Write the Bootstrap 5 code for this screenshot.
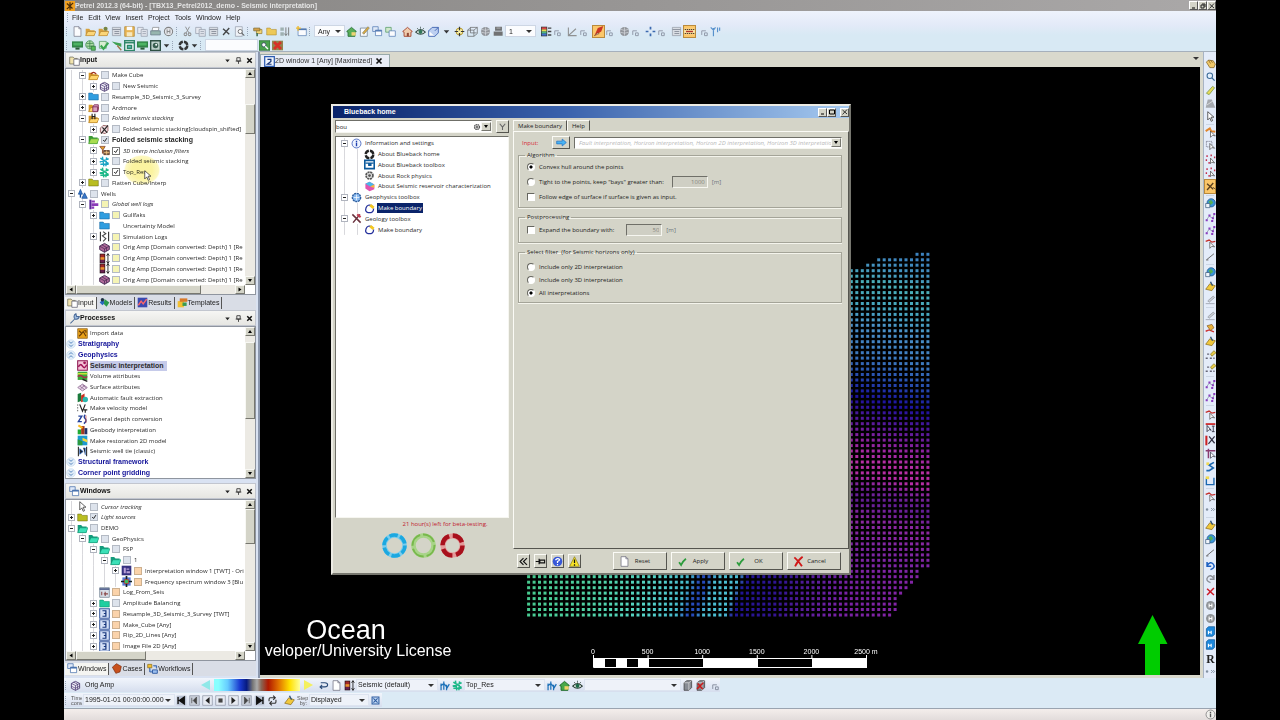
<!DOCTYPE html>
<html lang="en">
<head>
<meta charset="utf-8">
<meta name="viewport" content="width=device-width, initial-scale=1">
<title>Petrel 2012.3 - Seismic interpretation</title>
<link href="https://cdn.jsdelivr.net/npm/bootstrap@5.3.0/dist/css/bootstrap.min.css" rel="stylesheet">
<style>
:root{--face:#d4d4c8;--edge:#8b97ad}
body{background:#000;color:#222;font:7px/10px "Liberation Sans",Arial,sans-serif;padding:0 5%}
button,input,select{font:inherit;color:inherit;border-radius:0}
svg{display:block;flex:none}
.ic{width:11px;height:11px}
.app{background:#dbeaf5;min-height:100vh}
.tiny{font-family:"Open Sans","Noto Sans",sans-serif;font-size:6px;color:#1c1c1c}
.title-bar{background:linear-gradient(90deg,#868482,#aaa8a8);color:#e4e4e4;height:11px;font-weight:bold;padding-left:1px}
.title-bar .ic{width:10px;height:10px}
.bars{background:linear-gradient(#eef3fc,#e3eaf8 35%,#d8e9f4 60%);height:41px;border-bottom:1px solid #a5b0bc}
.menu-row{height:13px;padding-left:3px}
.menu-row a{color:#222;text-decoration:none;margin-right:5px}
.tb-row{height:14px;padding-left:2px}
.tb{border:0;background:none;padding:0;width:13px;height:13px;display:flex;align-items:center;justify-content:center;flex:none}
.tb.on{background:#fbc76a;border:1px solid #b98a3c}
.tb.slim{width:9px}
.tb-row .ic{opacity:.9}
.grip{width:5px;height:9px;border-left:1px dotted #98a6b8;flex:none}
.grip.mid{margin-left:1px}
.pick{appearance:none;border:1px solid #cdd6e4;background:#fbfcfe;padding:0 3px;height:12px;line-height:9px;flex:none;border-radius:0}
footer .pick{background:#eef2f9;border-color:#dde4f0;padding:0 0 0 1px}
.pickbox{position:relative;display:flex;flex:none}
.pickbox::after,.caret::after{content:"";border:3px solid transparent;border-top-color:#333;border-bottom:0;position:absolute;right:4px;top:5px}
.side{width:196px;flex:none;background:#d9e2f2;border-right:2px solid var(--edge);padding:0 2px 0 1px}
.pane-head{height:16px;background:linear-gradient(#f6f6f4,#e6e6e2);border:1px solid #c2c6cf;padding:0 0 0 3px;font-weight:bold;color:#111;margin:0;font-size:7px;line-height:10px}
.pane-head button{border:0;background:none;padding:0;width:11px;height:11px;display:flex;align-items:center;justify-content:center}
.pane-head button .ic{width:9px;height:9px}
.pane-body{background:#fff;border:1px solid #8f959f;overflow:hidden}
.rows{display:grid;grid-auto-rows:1fr;min-width:0;overflow:hidden;padding-top:1px}
.rows-20{height:30vh}.rows-14{height:21vh}
.rw{display:flex;align-items:center;white-space:nowrap;min-width:0;min-height:0;position:relative}
.rw label,.rw a{margin-left:2px;color:#2a2a2a;text-decoration:none}
.gd,.xp{width:11px;flex:none;align-self:stretch;background:linear-gradient(#d8d8dc,#d8d8dc) center/1px 100% no-repeat;display:flex;align-items:center;justify-content:center}
.xp i{width:7px;height:7px;border:1px solid #b0b4be;background:linear-gradient(#222,#222) center/3px 1px no-repeat,#fff}
.xp i.plus{background:linear-gradient(#222,#222) center/3px 1px no-repeat,linear-gradient(#222,#222) center/1px 3px no-repeat,#fff}
.ck{appearance:none;width:8px;height:8px;margin:0 1px 0 2px;border:1px solid #b4bac4;background:#dde3ec;flex:none}
.ck.yel{background:#f5f4b4}.ck.pch{background:#fbd3aa;border-color:#cdb08f}.ck.wht{background:#fff;border-color:#777}
.ck:checked{background-image:url("data:image/svg+xml,%3Csvg xmlns='http://www.w3.org/2000/svg' viewBox='0 0 8 8'%3E%3Cpath d='M1.5 4l2 2 3-4.5' fill='none' stroke='%23222' stroke-width='1.3'/%3E%3C/svg%3E")}
.bold-row{font-family:"Liberation Sans",sans-serif;font-size:7px;font-weight:bold}
.halo{position:absolute;left:58px;top:-12px;width:36px;height:30px;border-radius:50%;background:radial-gradient(#fbf3a0 40%,#fdf8c0 65%,transparent 72%);mix-blend-mode:multiply}
.ptr{position:absolute;left:76px;top:3px}
.vs{width:10px;background:#eceae4;flex:none;display:flex;flex-direction:column}
.hs{height:9px;background:#eceae4;display:flex;margin-right:10px}
.nub{width:10px;height:9px;border:1px solid;border-color:#f8f8f4 #77776f #77776f #f8f8f4;background:var(--face);padding:0;display:flex;align-items:center;justify-content:center;flex:none}
.nub::after{content:"";border:2px solid transparent;border-top:0;border-bottom:3px solid #000}
.nub.dn::after{transform:rotate(180deg)}.nub.lf::after{transform:rotate(-90deg)}.nub.rt::after{transform:rotate(90deg)}
.thumb{border:1px solid;border-color:#f8f8f4 #77776f #77776f #f8f8f4;background:var(--face)}
.pane-tabs{height:15px;background:#d9dde6;padding-left:0}
.pane-tabs a{display:flex;align-items:center;color:#222;text-decoration:none;border-right:1px solid #555;padding:0 2px;height:12px}
.pane-tabs a.act{background:#f5f5f2}
.proc{padding-left:11px}
.proc a{padding:0 3px 0 0}
.proc .sel{background:#c6cbea}
.grp{font:bold 7px/10px "Liberation Sans",sans-serif}
.grp .ic{width:10px;height:10px;opacity:.8}
.grp a{color:#14149a}
.strip{background:#d9d9cd;height:15px}
.strip .doc-tab{background:#e9edf6;border:1px solid #9aa;border-bottom:0;padding:0 4px 0 3px;height:13px;align-self:flex-end;color:#333}
.board{background:#000;position:relative;overflow:hidden;flex:1;border:solid #d9d9cd;border-width:0 3px 3px 0}
.right-tools{width:13px;flex:none;background:#e4ecf9;border-left:1px solid #a8b4c4;padding-top:5px}
.right-tools .tb{flex:1 1 0;width:12px;height:auto;min-height:0}
.right-tools hr{margin:1px 2px;color:#8492a8;flex:none}
.dlg{position:absolute;left:71px;top:37px;width:520px;background:var(--face);border:2px solid;border-color:#ecebe4 #77776f #77776f #ecebe4}
.dlg-title{background:linear-gradient(90deg,#0a246a,#3a62ac 45%,#a6caf0);color:#fff;font-weight:bold;height:12px;padding-left:11px;font-size:7px}
.cap{width:9px;height:9px;border:1px solid;border-color:#fff #555 #555 #fff;background:var(--face);padding:0;display:flex;align-items:center;justify-content:center}
.sunk{border:1px solid;border-color:#6f6f68 #f6f6f0 #f6f6f0 #6f6f68}
.raise{border:1px solid;border-color:#fbfbf6 #55554f #55554f #fbfbf6;background:var(--face)}
.find{width:176px}
.find-row{margin:2px 0 3px}
.found{background:#fff;height:382px}
.found .rows{height:98px;padding-left:2px}
.found .rows a{padding:0 1px}
.found .gd,.found .xp{width:13px}
.found .hit{background:#0a246a;color:#fff}
.trial{color:#c02030;padding-top:1px}
.side-page{padding-top:2px}
.dtab{border:1px solid;border-color:#fbfbf6 #55554f transparent #fbfbf6;padding:0 4px;color:#222;text-decoration:none;height:11px;line-height:11px}
.page{height:418px;padding:4px 6px 0 4px}
.pick-in{margin-bottom:2px}
fieldset{border:1px solid #a4a498;box-shadow:inset 1px 1px #f4f4ec,0 1px #f4f4ec;padding:0 8px 3px;margin-bottom:5px}
fieldset legend{float:none;width:auto;font-size:6px;line-height:8px;margin:0 0 0 -2px;padding:0 2px}
.opt{height:13px;gap:4px}
.opt.tall{height:15px}
.opt.lone{height:18px}
.opt input[type=radio],.opt input[type=checkbox]{appearance:none;width:8px;height:8px;margin:0;background:#fff;border:1px solid;border-color:#66665f #fff #fff #66665f;flex:none}
.opt input[type=radio]{border-radius:50%}
.opt input[type=radio]:checked{background:radial-gradient(#000 32%,#fff 42%)}
.num{width:36px;height:12px;background:#cfcfc4;color:#85857c;text-align:right;padding:0 2px;margin-left:4px}
.dlg-foot{padding:3px 8px 3px 4px}
.act-btn{width:54px;height:18px;display:flex;align-items:center;padding:0 5px}
.act-btn span{flex:1;text-align:center;padding-right:6px}
.sq{width:13px;height:14px;padding:0;display:flex;align-items:center;justify-content:center}
.foot-bar{height:15px}
.foot-bar .lit{background:linear-gradient(#f1f5fc,#d6deee);height:14px;padding-left:1px}
.ramp{width:86px;height:12px;background:linear-gradient(90deg,#8ff 0 5%,#6cf 16%,#1a3ad0 30%,#061a80 38%,#777 45%,#aaa 50%,#865 55%,#b01800 63%,#e07000 75%,#ffe000 88%,#ff9)}
.tri{width:0;height:0;border:5px solid transparent}
.tri.l{border-right:9px solid #8fe8e8;border-left:0}.tri.r{border-left:9px solid #f4f060;border-right:0}
.status-bar{flex:1 0 12px;background:linear-gradient(#f4eeec,#e2dcdb);border-top:1px solid #9aa4b0}
</style>
</head>
<body>
<svg width="0" height="0" style="display:none">
<symbol id="doc" viewBox="0 0 16 16"><path d="M3 1h7l3 3v11H3z" fill="#fff" stroke="#667" /><path d="M10 1v3h3" fill="none" stroke="#667"/></symbol>
<symbol id="open" viewBox="0 0 16 16"><path d="M1 14V4h5l2 2h6v8z" fill="#d79a2b"/><path d="M1 14l3-6h12l-3 6z" fill="#ffd56b" stroke="#a66d10" stroke-width=".8"/></symbol>
<symbol id="open2" viewBox="0 0 16 16"><use href="#open"/><circle cx="11" cy="4" r="3" fill="#6b7a30"/></symbol>
<symbol id="fold" viewBox="0 0 16 16"><path d="M1 13V3h5l2 2h7v8z" fill="#efc648" stroke="#a67c18" stroke-width=".8"/></symbol>
<symbol id="blu" viewBox="0 0 16 16"><path d="M1 13V3h5l2 2h7v8z" fill="#2f9de0" stroke="#1865a0" stroke-width=".8"/></symbol>
<symbol id="grnf" viewBox="0 0 16 16"><path d="M1 13V3h5l2 2h7v8z" fill="#20cfa0" stroke="#0c8c68" stroke-width=".8"/></symbol>
<symbol id="olv" viewBox="0 0 16 16"><path d="M1 13V3h5l2 2h7v8z" fill="#b9bd20" stroke="#6c7010" stroke-width=".8"/></symbol>
<symbol id="teal" viewBox="0 0 16 16"><path d="M1 14V3h5l2 2h6v9z" fill="#159a7c"/><path d="M1 14l3-7h12l-3 7z" fill="#3ce0b8" stroke="#0c8c68" stroke-width=".8"/></symbol>
<symbol id="ygrn" viewBox="0 0 16 16"><path d="M1 14V3h5l2 2h6v9z" fill="#3b9a35"/><path d="M1 14l3-7h12l-3 7z" fill="#a8dc50" stroke="#3b9a35" stroke-width=".8"/></symbol>
<symbol id="redf" viewBox="0 0 16 16"><use href="#open"/><path d="M4 6q4-5 8 0" fill="none" stroke="#a03020" stroke-width="1.600"/></symbol>
<symbol id="ardm" viewBox="0 0 16 16"><use href="#open"/><path d="M7 7h7v7H7zM7 7l2-3h6v7l-1 3" fill="#d8a0c0" stroke="#7a2458" stroke-width="1.200"/></symbol>
<symbol id="blkf" viewBox="0 0 16 16"><use href="#open"/><path d="M6 1v8M10 1v8M6 5h5" stroke="#222" stroke-width="1.6"/></symbol>
<symbol id="save" viewBox="0 0 16 16"><path d="M1 1h14v14H1z" fill="#eab043" stroke="#a8741c"/><path d="M4 1h8v5H4z" fill="#fff"/><path d="M4 9h8v6H4z" fill="#fbe7b4"/></symbol>
<symbol id="gbox" viewBox="0 0 16 16"><path d="M2 2h12v12H2z" fill="#d9dce2" stroke="#888e99"/><path d="M2 5h12M5 8h7M5 11h7" stroke="#888e99" stroke-width="1.5"/></symbol>
<symbol id="copy" viewBox="0 0 16 16"><path d="M1 2h8v9H1z" fill="#e8eaf0" stroke="#8b91a0"/><path d="M6 5h9v10H6z" fill="#dfe2e9" stroke="#8b91a0"/><path d="M8 8h5M8 11h5" stroke="#8b91a0"/></symbol>
<symbol id="prn" viewBox="0 0 16 16"><path d="M4 2h9l-1 5H3z" fill="#fff" stroke="#777"/><path d="M1 7h14v6H1z" fill="#8fb0a8" stroke="#567"/></symbol>
<symbol id="hring" viewBox="0 0 16 16"><circle cx="8" cy="8" r="6" fill="#e6e6ea" stroke="#777" stroke-width="1.5"/><path d="M6 5v6M10 5v6M6 8h4" stroke="#777" stroke-width="1.3"/></symbol>
<symbol id="cut" viewBox="0 0 16 16"><path d="M5 1l5 9M11 1L6 10" stroke="#888" stroke-width="1.4"/><circle cx="5" cy="12" r="2" fill="none" stroke="#888" stroke-width="1.5"/><circle cx="11" cy="12" r="2" fill="none" stroke="#888" stroke-width="1.5"/></symbol>
<symbol id="xx" viewBox="0 0 16 16"><path d="M3 4l9 8M12 3l-9 10" stroke="#333" stroke-width="2"/></symbol>
<symbol id="find" viewBox="0 0 16 16"><path d="M2 1h10v14H2z" fill="#f1f3f8" stroke="#8b91a0"/><circle cx="9" cy="8" r="3" fill="#fff" stroke="#555" stroke-width="1.2"/><path d="M11 10l4 4" stroke="#555" stroke-width="1.6"/></symbol>
<symbol id="ham" viewBox="0 0 16 16"><path d="M5 5h8v6H5z" fill="#f6d468" stroke="#8a6a1c"/><path d="M1 3h9v4H1z" fill="#d69a35" stroke="#6d5a20"/><path d="M6 10v5" stroke="#3b6a50" stroke-width="2.5"/></symbol>
<symbol id="sort" viewBox="0 0 16 16"><path d="M2 2h5v5H2zM2 9h5v5H2z" fill="#9aa"/><path d="M10 2v11M8 11l2 3 2-3M14 2v12" stroke="#666" fill="none" stroke-width="1.3"/></symbol>
<symbol id="neww" viewBox="0 0 16 16"><path d="M3 4h12v10H3z" fill="#fff" stroke="#456da8"/><path d="M3 4h12v2H3z" fill="#456da8"/><path d="M3 0v7M0 3h7" stroke="#efb51c" stroke-width="2"/></symbol>
<symbol id="home" viewBox="0 0 16 16"><path d="M1 8l7-6 7 6-2 1v6H3V9z" fill="#f2c9a5" stroke="#a33c24" stroke-width="1.4"/><path d="M7 10h3v5H7z" fill="#8a3a20"/></symbol>
<symbol id="ghome" viewBox="0 0 16 16"><path d="M1 8l7-6 7 6-2 1v6H3V9z" fill="#4aa848" stroke="#1c6a28" stroke-width="1.4"/><path d="M8 9h6v5H8z" fill="#f1d268"/></symbol>
<symbol id="note" viewBox="0 0 16 16"><path d="M2 3h10v12H2z" fill="#fff" stroke="#567"/><path d="M5 10l8-9 2 2-8 9z" fill="#e0a52c" stroke="#775"/></symbol>
<symbol id="wins" viewBox="0 0 16 16"><path d="M1 1h8v7H1z" fill="#dfe9f8" stroke="#3c68a8"/><path d="M5 6h9v8H5z" fill="#fff" stroke="#3c68a8"/><path d="M5 6h9v2H5z" fill="#3c68a8"/></symbol>
<symbol id="gwin" viewBox="0 0 16 16"><path d="M1 2h8v7H1z" fill="#cfe8c8" stroke="#3a8a4a"/><path d="M6 7h9v8H6z" fill="#fff" stroke="#3c68a8"/></symbol>
<symbol id="eye" viewBox="0 0 16 16"><path d="M1 9q7-8 14 0q-7 6-14 0z" fill="#fff" stroke="#243a30" stroke-width="1.6"/><circle cx="8" cy="8.500" r="3" fill="#1f6a48"/><path d="M3 3l2 2M8 1v3M13 3l-2 2" stroke="#243a30"/></symbol>
<symbol id="cube" viewBox="0 0 16 16"><path d="M2 5l6-3 6 3v7l-6 3-6-3z" fill="#ece9f4" stroke="#4b3a72" stroke-width="1.3"/><path d="M2 5l6 3 6-3M8 8v7M2 9l6 3 6-3M5 3l6 3v7" fill="none" stroke="#4b3a72"/></symbol>
<symbol id="pcube" viewBox="0 0 16 16"><path d="M1 6l7-4 7 4v5l-7 4-7-4z" fill="#b06a9a" stroke="#40244e" stroke-width="1.3"/><path d="M1 6l7 4 7-4M8 10v5M4 4l7 4v5" fill="none" stroke="#40244e"/></symbol>
<symbol id="bcube" viewBox="0 0 16 16"><path d="M1 7h9v8H1z" fill="#fff" stroke="#2b52a8" stroke-width="1.3"/><path d="M1 7l5-5h9v8l-5 5M10 7l5-5" fill="#b9cdf0" stroke="#2b52a8" stroke-width="1.3"/></symbol>
<symbol id="crt" viewBox="0 0 16 16"><path d="M4 6h8l-4 5z" fill="#222"/></symbol>
<symbol id="tgt" viewBox="0 0 16 16"><circle cx="8" cy="8" r="5" fill="#fbf0a0" stroke="#b08c14" stroke-width="1.4"/><path d="M8 1v5M8 10v5M1 8h5M10 8h5" stroke="#222" stroke-width="1.800"/></symbol>
<symbol id="wire" viewBox="0 0 16 16"><path d="M1 6h9v9H1zM5 2h10v9M1 6l4-4M10 6l5-4M10 15l5-4M5 2v8h9" fill="none" stroke="#555"/></symbol>
<symbol id="ball" viewBox="0 0 16 16"><circle cx="8" cy="8" r="6.500" fill="#8a8d92"/><path d="M3 5q5 3 10 0M2 9q6 3 12 0M8 2v12" fill="none" stroke="#d6d8dc"/></symbol>
<symbol id="cam" viewBox="0 0 16 16"><path d="M3 1h10v6H3zM1 8h13v6H1z" fill="#666"/><path d="M5 3h6" stroke="#ccc"/></symbol>
<symbol id="leg" viewBox="0 0 16 16"><path d="M0 1h9v14H0z" fill="#222"/><path d="M1 2h7v3H1z" fill="#d33"/><path d="M1 5h7v3H1z" fill="#e8d840"/><path d="M1 8h7v3H1z" fill="#3cb878"/><path d="M1 11h7v3H1z" fill="#36c"/><path d="M10 3h5M10 8h5M10 13h5" stroke="#333" stroke-width="2"/></symbol>
<symbol id="cnr" viewBox="0 0 16 16"><path d="M4 13V7h6M8 10h4v4H8z" fill="none" stroke="#8890a0" stroke-width="1.4"/></symbol>
<symbol id="axis" viewBox="0 0 16 16"><path d="M2 2v12h12M2 14L13 4" fill="none" stroke="#888" stroke-width="1.6"/></symbol>
<symbol id="comp" viewBox="0 0 16 16"><path d="M2 14L7 3l8-3-3 8z" fill="#c4261c"/><path d="M2 14l5-4 2 1z" fill="#fff" stroke="#742"/></symbol>
<symbol id="dots" viewBox="0 0 16 16"><path d="M8 1v4M8 11v4M1 8h4M11 8h4" stroke="#2a5ca8" stroke-width="2.5"/></symbol>
<symbol id="rul" viewBox="0 0 16 16"><path d="M0 4h16v8H0z" fill="#f9e3a4"/><path d="M1 5h14M1 11h14" stroke="#432" stroke-width="1.5" stroke-dasharray="2 1"/><path d="M3 8h10" stroke="#a22" stroke-width="2"/></symbol>
<symbol id="ant" viewBox="0 0 16 16"><path d="M1 2l4 4 3-4M5 3v12M11 2v7M14 2v5" fill="none" stroke="#4a88c8" stroke-width="1.7"/></symbol>
<symbol id="mon" viewBox="0 0 16 16"><path d="M0 2h16v9H0z" fill="#1f7a36"/><path d="M2 4h12v4H2z" fill="#3fae55"/><path d="M5 11h6v3H5z" fill="#184d26"/></symbol>
<symbol id="gglb" viewBox="0 0 16 16"><circle cx="7" cy="7" r="6" fill="#a9d8a0" stroke="#237a36"/><path d="M2 5h10M2 9h10M7 1v12" stroke="#237a36"/><path d="M9 9h6v6H9z" fill="#4ab848" stroke="#165a24"/></symbol>
<symbol id="gpen" viewBox="0 0 16 16"><path d="M2 2h10v10H2z" fill="#d9efcf" stroke="#3a8a4a"/><path d="M4 8l4 5 7-9" fill="none" stroke="#2aa040" stroke-width="3"/></symbol>
<symbol id="gflg" viewBox="0 0 16 16"><path d="M1 2l14 3v5L6 6z" fill="#2f9a40"/><path d="M9 8l6 7" stroke="#963" stroke-width="2"/></symbol>
<symbol id="gtab" viewBox="0 0 16 16"><path d="M1 1h14v14H1z" fill="#fff" stroke="#1c7c5c" stroke-width="2"/><path d="M1 4h14M5 8h6v4H5z" stroke="#1c7c5c" fill="#6cc" stroke-width="2"/></symbol>
<symbol id="gimg" viewBox="0 0 16 16"><path d="M1 1h14v14H1z" fill="#bcd0c8" stroke="#1c4030" stroke-width="2"/><circle cx="8" cy="8" r="4" fill="#28513f"/><circle cx="9" cy="7" r="1.500" fill="#fff"/></symbol>
<symbol id="ring" viewBox="0 0 16 16"><circle cx="8" cy="8" r="5.500" fill="none" stroke="#222" stroke-width="3.500" stroke-dasharray="7 1.640"/></symbol>
<symbol id="gfind" viewBox="0 0 16 16"><path d="M0 1h16v14H0z" fill="#3c9a3c" stroke="#145a1c"/><circle cx="7" cy="7" r="3" fill="#fff" stroke="#124"/><path d="M9 9l4 4" stroke="#fff" stroke-width="2"/></symbol>
<symbol id="rx" viewBox="0 0 16 16"><path d="M0 1h16v14H0z" fill="#8c7a3c"/><path d="M3 3l10 10M13 3L3 13" stroke="#d81c10" stroke-width="4"/></symbol>
<symbol id="inp" viewBox="0 0 16 16"><path d="M1 13V3h5l2 2h4v8z" fill="#f1e3ae" stroke="#665"/><path d="M7 6h8v9H7z" fill="#fff" stroke="#556"/></symbol>
<symbol id="wrn" viewBox="0 0 16 16"><path d="M2 15l7-7M8 8q-2-5 2-7l1 4h4q-1 5-6 4" fill="#9fbce0" stroke="#4a6a98" stroke-width="1.500"/></symbol>
<symbol id="pin" viewBox="0 0 16 16"><path d="M5 3h6v6H5zM3 9h10M8 9v5" fill="none" stroke="#333" stroke-width="1.500"/></symbol>
<symbol id="cls" viewBox="0 0 16 16"><path d="M4 4l8 8M12 4l-8 8" stroke="#111" stroke-width="2.600"/></symbol>
<symbol id="cyn" viewBox="0 0 16 16"><path d="M2 3l12 8M1 9l13-5M5 1l2 14M11 2l-1 13M2 12h12" stroke="#1ba4c4" stroke-width="2"/></symbol>
<symbol id="grn" viewBox="0 0 16 16"><path d="M2 3l12 8M1 9l13-5M5 1l2 14M11 2l-1 13M2 12h12" stroke="#1cb888" stroke-width="2.200"/></symbol>
<symbol id="flt" viewBox="0 0 16 16"><path d="M1 2h8l-3 5v5H5V7z" fill="#e0a030" stroke="#732"/><path d="M7 8h8v6H7z" fill="#8a6a4a" stroke="#421"/><path d="M7 11h8M11 8v6" stroke="#fc8"/></symbol>
<symbol id="ncube" viewBox="0 0 16 16"><path d="M2 6l4-4 7 1v7l-4 4-7-2z" fill="#f0dce0" stroke="#733"/><path d="M3 14L13 2M5 5l7 8" stroke="#222" stroke-width="1.600"/></symbol>
<symbol id="well" viewBox="0 0 16 16"><path d="M5 2l3 7H2zM11 7l4 8H7z" fill="#3a78c8" stroke="#124a98"/><path d="M5 9v5" stroke="#124a98" stroke-width="2"/></symbol>
<symbol id="log" viewBox="0 0 16 16"><path d="M2 1h3v14H2z" fill="#5a2a9a"/><path d="M5 2h5v3H5zM5 6h10v4H5zM5 11h4v3H5z" fill="#8a3ab8"/></symbol>
<symbol id="sim" viewBox="0 0 16 16"><path d="M2 1v14M14 1v14" stroke="#222" stroke-width="1.500"/><path d="M6 1l4 3-5 3 5 4-4 4" fill="none" stroke="#444" stroke-width="1.500"/></symbol>
<symbol id="cmap" viewBox="0 0 16 16"><path d="M1 1h8v14H1z" fill="#201018"/><path d="M2 2h6v4H2z" fill="#a22828"/><path d="M2 6h6v4H2z" fill="#f09030"/><path d="M2 10h6v4H2z" fill="#6a2050"/><path d="M13 1v14M11 4l2-3 2 3M11 12l2 3 2-3" fill="none" stroke="#222" stroke-width="1.300"/></symbol>
<symbol id="imp" viewBox="0 0 16 16"><path d="M1 1h14v14H1z" fill="#e8a21c" stroke="#83540c"/><path d="M3 4l4 4 2-3 4 7M3 12l4-4M10 4h3v3" fill="none" stroke="#6a3c08" stroke-width="1.600"/></symbol>
<symbol id="seis" viewBox="0 0 16 16"><path d="M1 1h14v14H1z" fill="#f5c4d8" stroke="#8c1650" stroke-width="1.500"/><path d="M2 10q3-6 6-1t6-2" fill="none" stroke="#a01458" stroke-width="2.200"/><circle cx="11" cy="4" r="2" fill="#a01458"/></symbol>
<symbol id="vol" viewBox="0 0 16 16"><path d="M1 1h14v12H1z" fill="#3ca83c"/><path d="M1 4h14" stroke="#d8e83c" stroke-width="2"/><path d="M1 8q4-3 7 0t7 0" stroke="#a8304c" fill="none" stroke-width="2"/><path d="M8 12l7 3" stroke="#222" stroke-width="2"/></symbol>
<symbol id="sfa" viewBox="0 0 16 16"><path d="M1 8l7-5 7 5-7 5z" fill="#e9d8e8" stroke="#835a88"/><path d="M4 6l7 5M8 4l6 5M5 10l6-5" stroke="#835a88"/></symbol>
<symbol id="afe" viewBox="0 0 16 16"><path d="M1 3l5-2v12l-5 2z" fill="#1a7a3c"/><path d="M6 5l5-3v11l-5 2z" fill="#c83020"/><circle cx="12" cy="11" r="4" fill="#2ab8b0"/></symbol>
<symbol id="vel" viewBox="0 0 16 16"><path d="M1 2v12" stroke="#222" stroke-dasharray="2 2"/><path d="M4 2l4 10 4-10M12 9v5M10 10h5" fill="none" stroke="#222" stroke-width="1.700"/></symbol>
<symbol id="dep" viewBox="0 0 16 16"><path d="M2 3h5l-5 8h5M12 1q-3 3 0 6t-2 7" fill="none" stroke="#22409a" stroke-width="2"/><path d="M13 2v11" stroke="#b33"/></symbol>
<symbol id="geo" viewBox="0 0 16 16"><path d="M1 8h5v7H1z" fill="#2a3"/><path d="M6 3h5v12H6z" fill="#a33a20"/><path d="M11 6h4v9h-4z" fill="#236"/><path d="M2 2l6 4" stroke="#fb2" stroke-width="3"/></symbol>
<symbol id="res" viewBox="0 0 16 16"><path d="M1 1h14v14H1z" fill="#1c9ad0"/><path d="M1 6l7 3v6H1z" fill="#2b9a40"/><path d="M8 4l7 3v4L8 8z" fill="#f3d840"/></symbol>
<symbol id="tie" viewBox="0 0 16 16"><path d="M2 1v14M14 1v14" stroke="#222" stroke-width="1.500"/><path d="M4 4l5 4-5 4zM9 3h3v10" fill="#222" stroke="#26c"/></symbol>
<symbol id="dwn" viewBox="0 0 16 16"><circle cx="8" cy="8" r="7" fill="#dceaf8" stroke="#b8d4ec"/><path d="M5 4l3 3 3-3M5 9l3 3 3-3" fill="none" stroke="#2a68b0" stroke-width="1.600"/></symbol>
<symbol id="upp" viewBox="0 0 16 16"><circle cx="8" cy="8" r="7" fill="#dceaf8" stroke="#b8d4ec"/><path d="M5 7l3-3 3 3M5 12l3-3 3 3" fill="none" stroke="#2a68b0" stroke-width="1.600"/></symbol>
<symbol id="arw" viewBox="0 0 16 16"><path d="M4 1v12l3-3 2 5 2-1-2-5h4z" fill="#fff" stroke="#333" stroke-width="1.100"/></symbol>
<symbol id="iw" viewBox="0 0 16 16"><path d="M1 1h14v14H1z" fill="#363080"/><path d="M4 4h3v8H4zM8 5h4v2H8zM8 9h5v3H8z" fill="#b9a0d8"/></symbol>
<symbol id="fw" viewBox="0 0 16 16"><path d="M2 2h12v12H2z" fill="#5878d8"/><path d="M8 0v16M0 8h16" stroke="#122" stroke-width="2.400"/><path d="M5 5h6v6H5z" fill="#3cc060" stroke="#c33"/></symbol>
<symbol id="lw" viewBox="0 0 16 16"><path d="M1 1h14v14H1z" fill="#d9dfe9" stroke="#678"/><path d="M1 3h14" stroke="#347" stroke-width="2"/><path d="M4 7v5M7 10h6M9 7v6" stroke="#844" stroke-width="1.500"/></symbol>
<symbol id="w3" viewBox="0 0 16 16"><path d="M1 1h14v14H1z" fill="#d4e0f6" stroke="#3c5ca0" stroke-width="1.500"/><path d="M5 4h5v4H7h3v4H5" fill="none" stroke="#16367c" stroke-width="1.800"/></symbol>
<symbol id="w2" viewBox="0 0 16 16"><path d="M1 1h14v14H1z" fill="#f0f5fc" stroke="#2c5cb0" stroke-width="1.800"/><path d="M5 5h5v3L5 12h6" fill="none" stroke="#16367c" stroke-width="1.800"/></symbol>
<symbol id="models" viewBox="0 0 16 16"><path d="M1 8l4-4 4 4-4 4z" fill="#2b68c0"/><path d="M8 3l7 5-4 6-4-4z" fill="#2a9a4c"/><circle cx="5" cy="4" r="2.500" fill="#234"/></symbol>
<symbol id="results" viewBox="0 0 16 16"><path d="M1 1h14v14H1z" fill="#3a4ab0"/><path d="M2 12l4-6 3 4 5-7" fill="none" stroke="#f66" stroke-width="2"/></symbol>
<symbol id="tmpl" viewBox="0 0 16 16"><path d="M1 6h9v9H1z" fill="#f3c030"/><path d="M4 2h11v5H4z" fill="#d87a28"/><path d="M8 8h6v5H8z" fill="#3a9a50"/></symbol>
<symbol id="wflow" viewBox="0 0 16 16"><path d="M1 2h6v5H1z" fill="#f3c030" stroke="#8a6a14"/><path d="M4 7v6h4M8 10h7v5H8zM9 4h5v4" fill="#9cc0f0" stroke="#2c58a0" stroke-width="1.300"/></symbol>
<symbol id="cases" viewBox="0 0 16 16"><path d="M2 6l6-5 7 4-2 8-6 2z" fill="#c8501c" stroke="#7a2a0c"/></symbol>
<symbol id="info" viewBox="0 0 16 16"><circle cx="8" cy="8" r="6.500" fill="#eef4ff" stroke="#4a68c0" stroke-width="1.300"/><path d="M8 4v2M8 7v5" stroke="#2040b0" stroke-width="2"/></symbol>
<symbol id="ginfo" viewBox="0 0 16 16"><circle cx="8" cy="8" r="6.500" fill="#f0efec" stroke="#888" stroke-width="1.300"/><path d="M8 4v2M8 7v5" stroke="#555" stroke-width="2"/></symbol>
<symbol id="bbox" viewBox="0 0 16 16"><path d="M1 2h14v12H1z" fill="#fff" stroke="#0c5a9c" stroke-width="2.600"/><path d="M2 6h12M7 6h3v3H7z" fill="#0c5a9c" stroke="#0c5a9c" stroke-width="2"/></symbol>
<symbol id="rock" viewBox="0 0 16 16"><circle cx="8" cy="8" r="5" fill="#ddd" stroke="#555" stroke-width="2.500" stroke-dasharray="3 1"/><circle cx="8" cy="8" r="2" fill="#555"/></symbol>
<symbol id="rsv" viewBox="0 0 16 16"><path d="M2 4l6-3 7 4v7l-7 3-6-4z" fill="#e054b0"/><path d="M2 4l6-3 7 4-6 3z" fill="#48b8e8"/><path d="M9 8l6-3v5z" fill="#f4b83c"/></symbol>
<symbol id="gear" viewBox="0 0 16 16"><circle cx="8" cy="8" r="6" fill="#8abaf0" stroke="#2c5c9c" stroke-width="2" stroke-dasharray="3 1"/><path d="M4 8h8M8 4v8" stroke="#fff"/></symbol>
<symbol id="hmr" viewBox="0 0 16 16"><path d="M2 2l12 12M13 2L3 14" stroke="#68303c" stroke-width="2.200"/><path d="M9 2l5 4" stroke="#c33c50" stroke-width="3"/></symbol>
<symbol id="bnd" viewBox="0 0 16 16"><path d="M12 4Q5 1 3 7t3 7q8 1 8-6" fill="#fff" stroke="#24309c" stroke-width="1.800"/><path d="M9 3l5 4" stroke="#f4c820" stroke-width="4"/></symbol>
<symbol id="barr" viewBox="0 0 16 16"><path d="M1 6h8V3l6 5-6 5v-3H1z" fill="#48b4f4" stroke="#1c6cc0"/></symbol>
<symbol id="ok" viewBox="0 0 16 16"><path d="M3 9l3 4q3-6 7-9" fill="none" stroke="#2c9c3c" stroke-width="2.600"/></symbol>
<symbol id="no" viewBox="0 0 16 16"><path d="M2 2q7 6 11 13M14 1Q7 6 3 15" fill="none" stroke="#d01818" stroke-width="2.600"/></symbol>
<symbol id="lt" viewBox="0 0 16 16"><path d="M8 3L3 8l5 5M13 3L8 8l5 5" fill="none" stroke="#111" stroke-width="1.700"/></symbol>
<symbol id="hpin" viewBox="0 0 16 16"><path d="M1 8h5M6 4v8M7 6h7v4H7z" fill="none" stroke="#111" stroke-width="1.700"/></symbol>
<symbol id="q" viewBox="0 0 16 16"><circle cx="8" cy="8" r="7" fill="#3858d8"/><path d="M5 6q3-4 6-1 0 2-3 3v2M8 11.500v2" fill="none" stroke="#fff" stroke-width="1.800"/></symbol>
<symbol id="warn" viewBox="0 0 16 16"><path d="M8 1l7 14H1z" fill="#f8e428" stroke="#887c10"/><path d="M8 5v5M8 12v2" stroke="#111" stroke-width="1.800"/></symbol>
<symbol id="fun" viewBox="0 0 16 16"><path d="M4 4l4 5 4-5M8 9v4" fill="none" stroke="#666" stroke-width="1.500"/></symbol>
<symbol id="hand" viewBox="0 0 16 16"><path d="M2 6l3-3 7 1 3 5-2 5H7z" fill="#f0c868" stroke="#7a5c20"/><path d="M5 3l3 5M8 3l3 4" stroke="#7a5c20"/></symbol>
<symbol id="mag" viewBox="0 0 16 16"><circle cx="7" cy="7" r="4" fill="#e4f0fc" stroke="#3a6a98" stroke-width="1.500"/><path d="M10 10l4 4" stroke="#3a6a98" stroke-width="2"/></symbol>
<symbol id="ylp" viewBox="0 0 16 16"><path d="M2 12l9-10 3 2-8 10z" fill="#e8dc58" stroke="#6a8a40"/></symbol>
<symbol id="ybl" viewBox="0 0 16 16"><path d="M1 12l6-8 8 3-5 7z" fill="#f1c83c" stroke="#86681c"/><path d="M8 1l3 6" stroke="#357" stroke-width="2"/></symbol>
<symbol id="trap" viewBox="0 0 16 16"><path d="M4 2h6l5 12H1z" fill="#a4a8ae"/><path d="M3 10l9-6" stroke="#eee"/></symbol>
<symbol id="rcur" viewBox="0 0 16 16"><path d="M1 5l5-2 4 3 5-1" fill="none" stroke="#c4302c" stroke-width="1.800"/><path d="M7 6v9l3-3 4 1z" fill="#fff" stroke="#444"/></symbol>
<symbol id="ocur" viewBox="0 0 16 16"><path d="M1 6l6-4 2 4 6 1" fill="none" stroke="#e0862c" stroke-width="2.800"/><path d="M8 6v9l3-3 4 1z" fill="#fff" stroke="#444"/></symbol>
<symbol id="bcur" viewBox="0 0 16 16"><path d="M2 2h8v8H2z" fill="none" stroke="#667" stroke-dasharray="2 1"/><path d="M7 5v9l3-3 4 1z" fill="#fff" stroke="#444"/></symbol>
<symbol id="rdts" viewBox="0 0 16 16"><path d="M2 3h2M8 2h2M13 5h2M1 9h2M5 13h2" stroke="#c22c48" stroke-width="2.500"/><path d="M8 6v8l2-2 4 1z" fill="#fff" stroke="#444"/></symbol>
<symbol id="pdts" viewBox="0 0 16 16"><path d="M2 12l4-6 5 3 3-6" fill="none" stroke="#789"/><path d="M1 12h3M5 5h3M10 9h3M12 3h3M9 13h3" stroke="#8a3cc0" stroke-width="3"/></symbol>
<symbol id="ydts" viewBox="0 0 16 16"><path d="M8 6l5-5 3 3-6 5z" fill="#e8cc48" stroke="#86741c"/><path d="M1 12h3M3 6h3M7 12h3M12 12h2" stroke="#667" stroke-width="2"/></symbol>
<symbol id="xd" viewBox="0 0 16 16"><path d="M3 4l9 8M12 3l-9 10" stroke="#5a4020" stroke-width="2"/><path d="M12 9l3 3" stroke="#222"/></symbol>
<symbol id="glb" viewBox="0 0 16 16"><circle cx="9" cy="7" r="6" fill="#3a94d8" stroke="#1c5080"/><path d="M5 5l4-2 3 4-4 3z" fill="#54b058"/><path d="M1 8h6v6H1z" fill="#f0f4fa" stroke="#357"/></symbol>
<symbol id="lin" viewBox="0 0 16 16"><path d="M2 13L13 4M2 13h3" stroke="#666" stroke-width="1.400"/></symbol>
<symbol id="gpl" viewBox="0 0 16 16"><path d="M4 10l8-7 2 2-8 7zM1 14h13" fill="#ccd0d6" stroke="#8c929c"/></symbol>
<symbol id="obl" viewBox="0 0 16 16"><path d="M1 12l5-2 7 3" stroke="#c33" stroke-width="2" fill="none"/><path d="M3 4l7-2 3 5-5 4z" fill="#e9b23c" stroke="#80561c"/></symbol>
<symbol id="bi" viewBox="0 0 16 16"><path d="M1 3h14" stroke="#c22" stroke-width="2.500"/><path d="M3 5v9l3-3 3 1zM12 6v8M10 6h4M10 14h4" fill="#fff" stroke="#334" stroke-width="1.300"/></symbol>
<symbol id="bv" viewBox="0 0 16 16"><path d="M1 4h14M5 1v14" stroke="#8a3c70" stroke-width="2.200"/><path d="M8 6v9l3-3 4 1z" fill="#fff" stroke="#334"/></symbol>
<symbol id="bx" viewBox="0 0 16 16"><path d="M2 1v14" stroke="#c22" stroke-width="3"/><path d="M6 2l8 10M14 2L5 13" stroke="#334" stroke-width="1.800"/></symbol>
<symbol id="step" viewBox="0 0 16 16"><path d="M13 2L6 6l6 4-6 4H2" fill="none" stroke="#1c68b0" stroke-width="2.500"/><path d="M2 2h4v4H2z" fill="#f0d850"/></symbol>
<symbol id="sqb" viewBox="0 0 16 16"><path d="M2 5v9h11V4" fill="none" stroke="#1c68b0" stroke-width="2"/><path d="M1 2h5v4H1z" fill="#f0d850"/></symbol>
<symbol id="und" viewBox="0 0 16 16"><path d="M3 3v6h6M3 8q5-7 9-2t-4 8" fill="none" stroke="#1c60c0" stroke-width="2.200"/></symbol>
<symbol id="redo" viewBox="0 0 16 16"><path d="M13 3v6H7M13 8Q8 1 4 6t4 8" fill="none" stroke="#8a8e96" stroke-width="2"/></symbol>
<symbol id="rdx" viewBox="0 0 16 16"><path d="M3 4l10 9M13 3L3 13" stroke="#cc1c28" stroke-width="2.200"/></symbol>
<symbol id="gh" viewBox="0 0 16 16"><circle cx="8" cy="8" r="6.500" fill="#909498"/><path d="M6 5v6M10 5v6M6 8h4" stroke="#fff" stroke-width="1.600"/></symbol>
<symbol id="bh" viewBox="0 0 16 16"><path d="M2 4l3-3h9v11l-3 3H2z" fill="#1c88dc" stroke="#0c5494"/><path d="M5 7v5M9 7v5M5 9h4" stroke="#fff" stroke-width="1.600"/></symbol>
<symbol id="rr" viewBox="0 0 16 16"><text x="8" y="14" text-anchor="middle" font-family="Liberation Serif" font-size="17" font-weight="bold" fill="#222">R</text></symbol>
<symbol id="mini" viewBox="0 0 16 16"><path d="M2 7h2v2H2zM9 6l2 2-2 2M12 6l2 2-2 2" fill="none" stroke="#567"/></symbol>
<symbol id="pf" viewBox="0 0 16 16"><path d="M1 1h14v14H1z" fill="#b9c2d2"/><path d="M3 3v10M12 3v10L5 8z" fill="#111" stroke="#111" stroke-width="2"/></symbol>
<symbol id="pb" viewBox="0 0 16 16"><path d="M1 1h14v14H1z" fill="#e6eaf2" stroke="#8a92a2"/><path d="M11 3v10L5 8z" fill="#222"/></symbol>
<symbol id="pbs" viewBox="0 0 16 16"><path d="M1 1h14v14H1z" fill="#c9cfda" stroke="#8a92a2"/><path d="M4 4v8M11 3v10L6 8z" fill="#444" stroke="#444"/></symbol>
<symbol id="ps" viewBox="0 0 16 16"><path d="M1 1h14v14H1z" fill="#e6eaf2" stroke="#8a92a2"/><path d="M5 5h6v6H5z" fill="#444"/></symbol>
<symbol id="pp" viewBox="0 0 16 16"><path d="M1 1h14v14H1z" fill="#e6eaf2" stroke="#8a92a2"/><path d="M5 3v10l6-5z" fill="#222"/></symbol>
<symbol id="pps" viewBox="0 0 16 16"><path d="M1 1h14v14H1z" fill="#c9cfda" stroke="#8a92a2"/><path d="M12 4v8M5 3v10l5-5z" fill="#444" stroke="#444"/></symbol>
<symbol id="pe" viewBox="0 0 16 16"><path d="M1 1h14v14H1z" fill="#b9c2d2"/><path d="M13 3v10M4 3v10l7-5z" fill="#111" stroke="#111" stroke-width="2"/></symbol>
<symbol id="loop" viewBox="0 0 16 16"><path d="M3 9V6q0-2 2-2h6M13 7v3q0 2-2 2H5M9 1l3 3-3 3M7 9l-3 3 3 3" fill="none" stroke="#333" stroke-width="1.600"/></symbol>
<symbol id="tm" viewBox="0 0 16 16"><text x="0" y="7" font-size="8" fill="#555">Time</text><text x="0" y="15" font-size="8" fill="#555">conv</text></symbol>
<symbol id="sb" viewBox="0 0 16 16"><text x="0" y="7" font-size="8" fill="#555">Step</text><text x="4" y="15" font-size="8" fill="#555">by:</text></symbol>
<symbol id="ret" viewBox="0 0 16 16"><path d="M4 4h6q4 0 4 3t-4 3H3M6 7l-3 3 3 3" fill="none" stroke="#2a4a78" stroke-width="1.600"/></symbol>
<symbol id="surf" viewBox="0 0 16 16"><path d="M3 5v10M7 2v12M11 7v8M2 9l5-4 5 6 3-5" fill="none" stroke="#1c70b8" stroke-width="1.800"/></symbol>
<symbol id="gcube" viewBox="0 0 16 16"><path d="M3 4l4-3h7v10l-4 4H3z" fill="#888c94" stroke="#333"/><path d="M3 4h7v11M10 4l4-3" fill="none" stroke="#ddd"/></symbol>
<symbol id="rcube" viewBox="0 0 16 16"><use href="#gcube"/><path d="M4 5l7 8M12 4L3 13" stroke="#c81c1c" stroke-width="2.400"/></symbol>
<symbol id="sink" viewBox="0 0 16 16"><path d="M3 3h10v10H3z" fill="#c4d8f4" stroke="#2c5ca0" stroke-width="1.500"/><path d="M5 5l6 6M11 5l-6 6" stroke="#2c5ca0" stroke-width="1.500"/></symbol>
<symbol id="logo" viewBox="0 0 16 16"><path d="M0 0h16v16H0z" fill="#f0a020"/><path d="M3 13l10-10M3 4l9 8M8 2v12" stroke="#4a2c08" stroke-width="2"/></symbol>
</svg>

<div class="app d-flex flex-column">
  <header>
    <div class="title-bar d-flex align-items-center overflow-hidden text-nowrap">
      <svg class="ic"><use href="#logo"/></svg><span>Petrel 2012.3 (64-bit) - [TBX13_Petrel2012_demo - Seismic interpretation]</span>
      <span class="ms-auto d-flex"><button class="cap" aria-label="Minimize"><svg width="6" height="6"><path d="M1 5h3" stroke="#000"/></svg></button><button class="cap" aria-label="Restore"><svg width="6" height="6" viewBox="0 0 6 6"><path d="M2 1h3v3M1 2h3v3H1z" fill="none" stroke="#222"/></svg></button><button class="cap" aria-label="Close"><svg width="8" height="8"><use href="#xx"/></svg></button></span>
    </div>
    <div class="bars">
      <nav class="menu-row d-flex align-items-center"><span class="grip"></span><a href="#">File</a><a href="#">Edit</a><a href="#">View</a><a href="#">Insert</a><a href="#">Project</a><a href="#">Tools</a><a href="#">Window</a><a href="#">Help</a></nav>
      <div class="tb-row d-flex align-items-center" data-bar="doc open open2 gbox save copy prn hring | cut copy gbox xx find | ham fold sort . neww | pick:Any:31 ghome note wins gwin . home eye bcube crt tgt wire ball cam pick:1:31 . leg cnr- . axis cnr- . +comp cnr- . ball cnr- . dots cnr- . gbox +rul . cnr- ant"></div>
      <div class="tb-row d-flex align-items-center" data-bar="mon gglb gpen gflg gtab mon gimg crt- | ring crt- | text:53 gfind rx"></div>
    </div>
  </header>

  <div class="d-flex flex-fill">
    <aside class="side d-flex flex-column">
      <section>
        <h2 class="pane-head d-flex align-items-center" data-head="inp">Input</h2>
        <div class="pane-body">
          <div class="d-flex"><div class="rows rows-20 flex-fill tiny" id="inputTree"></div>
            <div class="vs"><button class="nub" aria-label="Up"></button><div style="height:12%"></div><div class="thumb" style="height:14%"></div><button class="nub dn mt-auto" aria-label="Down"></button></div></div>
          <div class="hs"><button class="nub lf" aria-label="Left"></button><div class="thumb" style="width:70%"></div><button class="nub rt ms-auto" aria-label="Right"></button></div>
        </div>
        <nav class="pane-tabs d-flex align-items-center"><a class="act" href="#"><svg class="ic"><use href="#inp"/></svg>Input</a><a href="#"><svg class="ic"><use href="#models"/></svg>Models</a><a href="#"><svg class="ic"><use href="#results"/></svg>Results</a><a href="#"><svg class="ic"><use href="#tmpl"/></svg>Templates</a></nav>
      </section>
      <section>
        <h2 class="pane-head d-flex align-items-center" data-head="wrn">Processes</h2>
        <div class="pane-body d-flex"><div class="rows rows-14 flex-fill tiny" id="procTree"></div>
          <div class="vs"><button class="nub" aria-label="Up"></button><div style="height:4%"></div><div class="thumb" style="height:51%"></div><button class="nub dn mt-auto" aria-label="Down"></button></div></div>
      </section>
      <section class="mt-1">
        <h2 class="pane-head d-flex align-items-center" data-head="wins">Windows</h2>
        <div class="pane-body">
          <div class="d-flex"><div class="rows rows-14 flex-fill tiny" id="winTree"></div>
            <div class="vs"><button class="nub" aria-label="Up"></button><div class="thumb" style="height:23%"></div><button class="nub dn mt-auto" aria-label="Down"></button></div></div>
          <div class="hs"><button class="nub lf" aria-label="Left"></button><div class="thumb" style="width:39%"></div><button class="nub rt ms-auto" aria-label="Right"></button></div>
        </div>
        <nav class="pane-tabs d-flex align-items-center"><a class="act" href="#"><svg class="ic"><use href="#wins"/></svg>Windows</a><a href="#"><svg class="ic"><use href="#cases"/></svg>Cases</a><a href="#"><svg class="ic"><use href="#wflow"/></svg>Workflows</a></nav>
      </section>
    </aside>

    <main class="d-flex flex-column flex-fill">
      <div class="strip d-flex align-items-center caret position-relative"><span class="doc-tab d-flex align-items-center"><svg class="ic"><use href="#w2"/></svg>2D window 1 [Any] [Maximized]<button class="tb" aria-label="Close tab"><svg width="10" height="10"><use href="#cls"/></svg></button></span></div>
      <div class="board">
        <svg id="map" class="w-100 h-100" viewBox="260 67 940 608" preserveAspectRatio="xMinYMin meet"></svg>
        <section class="dlg tiny" role="dialog" aria-label="Blueback home">
          <div class="dlg-title d-flex align-items-center" style="font-family:'Liberation Sans',sans-serif"><span>Blueback home</span><span class="ms-auto d-flex"><button class="cap" aria-label="Minimize"><svg width="6" height="6"><path d="M1 5h3" stroke="#000"/></svg></button><button class="cap" aria-label="Maximize"><svg width="6" height="6"><path d="M.5 1h5v4h-5z" fill="none" stroke="#000"/></svg></button><button class="cap ms-1" aria-label="Close"><svg width="8" height="8"><use href="#xx"/></svg></button></span></div>
          <div class="d-flex">
            <div class="find d-flex flex-column">
              <div class="find-row d-flex gap-1" style="padding-left:2px"><div class="sunk bg-white d-flex align-items-center flex-fill" style="height:13px"><input class="border-0 p-0 flex-fill tiny" style="min-width:0" value="bou" aria-label="Search"><svg width="8" height="8"><use href="#rock"/></svg><button class="nub dn" aria-label="Recent"></button></div><button class="sq raise" style="height:13px" aria-label="Filter"><svg class="ic"><use href="#fun"/></svg></button></div>
              <div class="found sunk" style="margin-left:2px"><div class="rows" id="foundTree"></div></div>
              <div class="trial ps-5 text-center">21 hour(s) left for beta-testing.</div>
              <div class="d-flex justify-content-center gap-1 pt-1 ps-1">
                <svg width="25" height="25" viewBox="0 0 25 25"><circle cx="12.500" cy="12.500" r="10" fill="none" stroke="#7accec" stroke-width="4.500"/><circle cx="12.500" cy="12.500" r="10.500" fill="none" stroke="#1ca8e0" stroke-width="3.500" stroke-dasharray="8.500 2.500"/></svg>
                <svg width="25" height="25" viewBox="0 0 25 25"><circle cx="12.500" cy="12.500" r="10" fill="none" stroke="#a8d488" stroke-width="4.500"/><circle cx="12.500" cy="12.500" r="11" fill="none" stroke="#78b84c" stroke-width="2" stroke-dasharray="14 3"/></svg>
                <svg width="25" height="25" viewBox="0 0 25 25"><circle cx="12.500" cy="12.500" r="9.500" fill="none" stroke="#e49a9a" stroke-width="5"/><circle cx="12.500" cy="12.500" r="10" fill="none" stroke="#a8101c" stroke-width="4.500" stroke-dasharray="12 3.700"/></svg>
              </div>
            </div>
            <div class="side-page flex-fill ps-1">
              <nav class="d-flex ps-0"><a class="dtab" href="#">Make boundary</a><a class="dtab" href="#">Help</a></nav>
              <div class="page raise">
                <div class="pick-in d-flex align-items-center ps-1"><label for="inputData" style="color:#d42838;width:30px">Input:</label><button class="raise sq me-1" style="width:18px;height:13px" aria-label="Insert"><svg class="ic"><use href="#barr"/></svg></button><div class="sunk bg-white d-flex flex-fill" style="height:12px"><input id="inputData" class="border-0 p-0 ps-1 flex-fill tiny fst-italic" style="color:#b8b8b8;min-width:0" value="Fault interpretation, Horizon interpretation, Horizon 2D interpretation, Horizon 3D interpretation"><button class="nub dn" aria-label="Open"></button></div></div>
                <fieldset><legend>Algorithm</legend>
                  <div class="opt tall d-flex align-items-center"><input type="radio" name="alg" id="a1" checked><label for="a1">Convex hull around the points</label></div>
                  <div class="opt tall d-flex align-items-center"><input type="radio" name="alg" id="a2"><label for="a2">Tight to the points, keep "bays" greater than:</label><input class="num sunk" value="1000" aria-label="Bay size"><span class="text-secondary">[m]</span></div>
                  <div class="opt tall d-flex align-items-center"><input type="checkbox" id="a3"><label for="a3">Follow edge of surface if surface is given as input.</label></div>
                </fieldset>
                <fieldset><legend>Postprocessing</legend>
                  <div class="opt lone d-flex align-items-center"><input type="checkbox" id="p1"><label for="p1">Expand the boundary with:</label><input class="num sunk ms-2" value="50" aria-label="Distance"><span class="text-secondary">[m]</span></div>
                </fieldset>
                <fieldset class="pt-1"><legend>Select filter &nbsp;(for Seismic horizons only)</legend>
                  <div class="opt d-flex align-items-center"><input type="radio" name="flt" id="f1"><label for="f1">Include only 2D interpretation</label></div>
                  <div class="opt d-flex align-items-center"><input type="radio" name="flt" id="f2"><label for="f2">Include only 3D interpretation</label></div>
                  <div class="opt d-flex align-items-center"><input type="radio" name="flt" id="f3" checked><label for="f3">All interpretations</label></div>
                </fieldset>
              </div>
              <div class="dlg-foot d-flex align-items-center gap-1">
                <button class="sq raise" aria-label="Collapse"><svg class="ic"><use href="#lt"/></svg></button><button class="sq raise" aria-label="Pin"><svg class="ic"><use href="#hpin"/></svg></button><button class="sq raise" aria-label="Help"><svg class="ic"><use href="#q"/></svg></button><button class="sq raise me-auto" aria-label="Warnings"><svg class="ic"><use href="#warn"/></svg></button>
                <button class="act-btn raise"><svg class="ic"><use href="#doc"/></svg><span>Reset</span></button><button class="act-btn raise"><svg class="ic"><use href="#ok"/></svg><span>Apply</span></button><button class="act-btn raise"><svg class="ic"><use href="#ok"/></svg><span>OK</span></button><button class="act-btn raise"><svg class="ic"><use href="#no"/></svg><span>Cancel</span></button>
              </div>
            </div>
          </div>
        </section>
      </div>
    </main>
    <div class="right-tools d-flex flex-column" data-bar="hand mag ylp trap arw / ocur bcur rdts rdts +xd / glb pdts pdts rcur lin / glb ybl gpl / gpl obl ybl ydts ydts / pdts pdts / rcur bi bx bv step sqb / rcur mini / ybl glb lin und redo rdx gh gh bh bh rr mini"></div>
  </div>

  <footer class="d-flex flex-column">
    <div class="foot-bar d-flex"><div class="lit d-flex align-items-center">
      <span class="grip"></span><svg class="ic"><use href="#cube"/></svg><span class="ps-1" style="width:120px">Orig Amp</span>
      <span class="tri l"></span><span class="ps-1"></span><span class="ramp"></span><span class="ps-1"></span><span class="tri r"></span>
      <span class="d-flex ps-1" data-bar="ret doc cmap pick:Seismic_(default):82 surf grn pick:Top_Res:81 surf ghome eye pick::97 gcube rcube . cnr-"></span></div></div>
    <div class="foot-bar d-flex"><div class="lit d-flex align-items-center">
      <span class="grip"></span><span class="d-flex" data-bar="tm pick:1995-01-01_00:00:00.000:92 pf pbs pb ps pp pps pe loop . ybl sb pick:Displayed:60 sink"></span></div></div>
    <div class="status-bar d-flex justify-content-end"><svg class="ic"><use href="#ginfo"/></svg></div>
  </footer>
</div>

<script src="https://cdn.jsdelivr.net/npm/bootstrap@5.3.0/dist/js/bootstrap.bundle.min.js"></script>
<script>
const icon = n => `<svg class="ic"><use href="#${n}"/></svg>`;

// Toolbars: icon names, "|" grip, "." gap, "/" rule, "+" pressed, trailing "-" slim
document.querySelectorAll('[data-bar]').forEach(bar => {
  const side = bar.classList.contains('right-tools');
  bar.innerHTML = (side || bar.closest('footer') ? '' : '<span class="grip"></span>') + bar.dataset.bar.split(' ').map(t => {
    if (t === '|') return '<span class="grip mid"></span>';
    if (t === '.') return '<span class="ps-1"></span>';
    if (t === '/') return '<hr>';
    if (t.startsWith('pick:')) {
      const p = t.slice(5), k = p.lastIndexOf(':'), v = p.slice(0, k).replaceAll('_(', ' (').replace('01_00', '01 00');
      return `<span class="pickbox"><select class="pick" aria-label="Choice" style="width:${p.slice(k + 1)}px"><option>${v}</option></select></span>`;
    }
    if (t.startsWith('text:')) return `<input class="pick" aria-label="Search" style="width:${t.slice(5)}px">`;
    const slim = t.endsWith('-'), on = t[0] === '+', n = t.replace(/[-+]/g, '');
    return `<button class="tb ${slim ? 'slim' : ''} ${on ? 'on' : ''}" aria-label="${n}">${icon(n)}</button>`;
  }).join('');
});

document.querySelectorAll('[data-head]').forEach(h => {
  h.innerHTML = icon(h.dataset.head) + `<span class="me-auto">${h.textContent}</span>` +
    ['crt', 'pin', 'cls'].map(n => `<button aria-label="${n}">${icon(n)}</button>`).join('');
});

// Tree rows: [level, expander, icon, tick box, text, text class]
let uid = 0;
const tree = (id, rows) => document.getElementById(id).innerHTML = rows.map(([lv, xp, ic, ck, text, cls = '']) => {
  const k = 'n' + (++uid);
  return `<div class="rw">${'<span class="gd"></span>'.repeat(lv)}<span class="xp">${xp ? `<i class="${xp === '+' ? 'plus' : ''}"></i>` : ''}</span>${icon(ic)}` +
    (ck === null ? '' : ck === ' ' ? '<span class="gd" style="background:none"></span>' : `<input type="checkbox" class="ck ${ck.replace('!', '')}" id="${k}" ${ck.includes('!') ? 'checked' : ''}>`) +
    (ck === null || ck === ' ' ? `<a href="#" class="${cls}">${text}</a>` : `<label for="${k}" class="${cls}">${text}</label>`) +
    (text === 'Top_Res' ? `<span class="halo"></span><span class="ptr">${icon('arw')}</span>` : '') + '</div>';
}).join('');
const O = 'Orig Amp [Domain converted: Depth] 1 [Re', I = 'fst-italic';
tree('inputTree', [
  [1,'-','redf','','Make Cube'],[2,'+','cube','','New Seismic'],[1,'+','blu','','Resample_3D_Seismic_3_Survey'],[1,'+','ardm','','Ardmore'],
  [1,'-','blkf','','Folded seismic stacking',I],[2,'+','ncube','','Folded seismic stacking[cloudspin_shifted]'],[1,'-','ygrn','!','Folded seismic stacking','bold-row'],
  [2,'+','flt','wht!','3D interp inclusion filters',I],[2,'+','cyn','','Folded seismic stacking'],[2,'+','grn','wht!','Top_Res'],[1,'+','olv','','Flatten Cube/Interp'],
  [0,'-','well','','Wells'],[1,'-','log','yel','Global well logs',I],[2,'+','blu','yel','Gullfaks'],[2,'','blu',' ','Uncertainty Model'],[2,'+','sim','yel','Simulation Logs'],
  [2,'','pcube','yel',O],[2,'','cmap','yel',O],[2,'','cmap','yel',O],[2,'','pcube','yel',O]]);
tree('winTree', [
  [0,'','arw','','Cursor tracking',I],[0,'+','olv','!','Light sources',I],[0,'-','teal','','DEMO'],[1,'-','teal','','GeoPhysics'],[2,'-','teal','','FSP'],[3,'-','teal','','1'],
  [4,'+','iw','pch','Interpretation window 1 [TWT] - Ori'],[4,'','fw','pch','Frequency spectrum window 3 [Blu'],[2,'','lw','pch','Log_From_Seis'],[2,'+','grnf','','Amplitude Balancing'],
  [2,'+','w3','pch','Resample_3D_Seismic_3_Survey [TWT]'],[2,'+','w3','pch','Make_Cube [Any]'],[2,'+','w3','pch','Flip_2D_Lines [Any]'],[2,'+','w3','pch','Image File 2D [Any]']]);
tree('foundTree', [
  [0,'-','info',null,'Information and settings'],[1,'','ring',null,'About Blueback home'],[1,'','bbox',null,'About Blueback toolbox'],[1,'','rock',null,'About Rock physics'],
  [1,'','rsv',null,'About Seismic reservoir characterization'],[0,'-','gear',null,'Geophysics toolbox'],[1,'','bnd',null,'Make boundary','hit'],[0,'-','hmr',null,'Geology toolbox'],[1,'','bnd',null,'Make boundary']]);
document.getElementById('procTree').innerHTML = [
  ['imp','Import data'],['dwn','Stratigraphy',1],['upp','Geophysics',1],['seis','Seismic interpretation',2],['vol','Volume attributes'],['sfa','Surface attributes'],['afe','Automatic fault extraction'],
  ['vel','Make velocity model'],['dep','General depth conversion'],['geo','Geobody interpretation'],['res','Make restoration 2D model'],['tie','Seismic well tie (classic)'],['dwn','Structural framework',1],['dwn','Corner point gridding',1]
].map(([ic, t, k]) => `<div class="rw ${k === 1 ? 'grp' : 'proc'}">${icon(ic)}<a href="#" class="${k === 2 ? 'sel bold-row' : ''}">${t}</a></div>`).join('');

// Map view: horizon points coloured by depth, scale bar, north arrow
const mix = (stops, v) => {
  let i = 1; while (i < stops.length - 1 && v > stops[i][0]) i++;
  const [a, c] = stops[i - 1], [b, d] = stops[i], f = Math.max(0, Math.min(1, (v - a) / (b - a)));
  return 'rgb(' + c.map((x, j) => Math.round(x + (d[j] - x) * f)) + ')';
};
const east = [[254,[60,130,190]],[272,[70,150,190]],[285,[75,175,185]],[310,[70,165,190]],[330,[75,145,200]],[360,[60,120,190]],[380,[40,80,175]],[395,[30,40,165]],[404,[30,18,160]],[425,[85,25,155]],[445,[140,35,160]],[465,[185,48,165]],[480,[180,45,165]],[492,[120,35,155]],[505,[100,30,150]],[525,[140,40,160]],[560,[125,38,165]],[616,[130,35,165]]];
const south = [[528,[70,200,140]],[600,[80,210,165]],[660,[85,210,200]],[690,[70,185,205]],[700,[40,80,190]],[708,[35,70,185]],[716,[75,190,210]],[738,[75,190,210]],[746,[32,20,150]],[785,[50,20,145]],[810,[85,28,155]],[850,[120,34,165]],[900,[130,36,165]]];
let s = '';
for (let r = 0; r <= 66; r++) for (let c = 0; c <= 73; c++) {
  const x = 528.6 + c * 5.47, y = 254.3 + r * 5.465;
  if (x < 850 && y < 575) continue;
  const min = [916, 876, 866][r] || 0, max = r < 58 ? 930 : [918, 918, 912, 908, 902, 897, 897, 897, 891][r - 58];
  if (x < min || x > max) continue;
  s += `<rect x="${(x - 1.5).toFixed(1)}" y="${(y - 1.5).toFixed(1)}" width="3" height="3" fill="${y > 572 ? mix(south, x + (y - 577) * .35) : mix(east, y + (x - 890) * -.2)}"/>`;
}
s += '<g fill="#fff" font-family="Liberation Sans, sans-serif"><text x="346" y="639" text-anchor="middle" font-size="27">Ocean</text><text x="358" y="656" text-anchor="middle" font-size="16">veloper/University License</text>';
[0, 500, 1000, 1500, 2000, 2500].forEach((v, i) => s += `<text x="${593 + i * 54.6}" y="654" text-anchor="middle" font-size="7">${v}${v === 2500 ? ' m' : ''}</text><path d="M${593.5 + i * 54.6} 655v4" stroke="#fff"/>`);
s += '<path d="M593.500 658.500h273v9h-273z" fill="none" stroke="#fff"/><path d="M594 659h11v9h-11zM616 659h11v9h-11zM638 659h11v9h-11zM703 659h55v9h-55zM812 659h55v9h-55z"/></g>';
s += '<path d="M1152.500 615l15 29h-7.500v31h-15v-31h-7z" fill="#0c0"/>';
document.getElementById('map').innerHTML = s;
</script>
</body>
</html>
